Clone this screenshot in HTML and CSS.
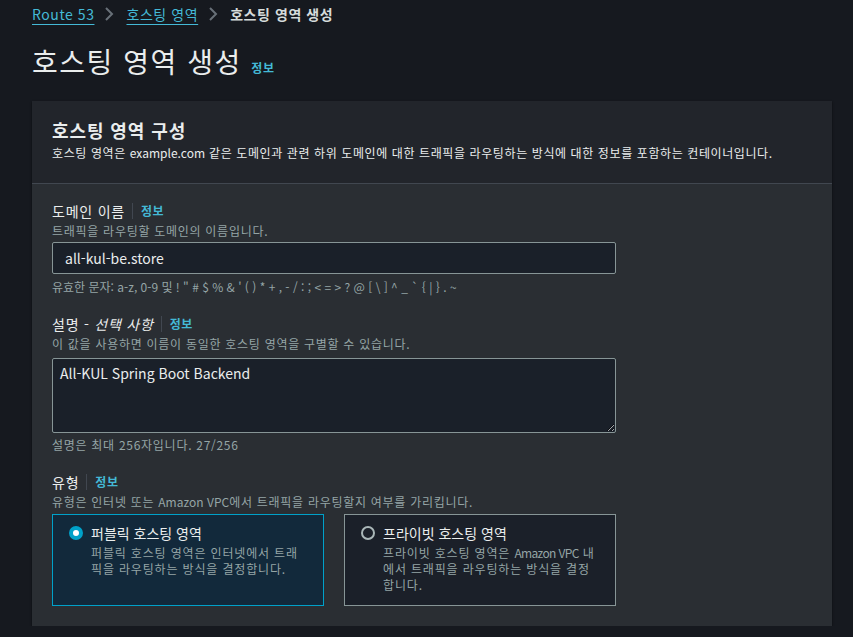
FILE: index.html
```html
<!DOCTYPE html>
<html lang="ko">
<head>
    <meta charset="UTF-8">
    <meta name="viewport" content="width=device-width, initial-scale=1.0">
    <title>호스팅 영역 생성</title>
    <link rel="stylesheet" href="styles.css">
</head>
<body>

<nav class="breadcrumbs">
    <a href="#" class="crumb-link">Route 53</a>
    <svg class="chevron" width="10" height="14" viewBox="0 0 10 14">
        <polyline points="2,1 8,7 2,13" fill="none" stroke="#687078" stroke-width="2"/>
    </svg>
    <a href="#" class="crumb-link">호스팅 영역</a>
    <svg class="chevron" width="10" height="14" viewBox="0 0 10 14">
        <polyline points="2,1 8,7 2,13" fill="none" stroke="#687078" stroke-width="2"/>
    </svg>
    <span class="crumb-current">호스팅 영역 생성</span>
</nav>

<h1 class="page-title">호스팅 영역 생성 <a href="#" class="info-link">정보</a></h1>

<div class="container">
    <div class="container-header">
        <h2>호스팅 영역 구성</h2>
        <p>호스팅 영역은 <span class="latin">example.com</span> 같은 도메인과 관련 하위 도메인에 대한 트래픽을 라우팅하는 방식에 대한 정보를 포함하는 컨테이너입니다.</p>
    </div>

    <div class="container-body">
        <div class="field">
            <div class="label"><span>도메인 이름</span><span class="divider"></span><a href="#" class="info-link">정보</a></div>
            <div class="description">트래픽을 라우팅할 도메인의 이름입니다.</div>
            <input class="text-input" type="text" value="all-kul-be.store">
            <div class="constraint">유효한 문자: a-z, 0-9 및 ! " # $ % &amp; ' ( ) * + , - / : ; &lt; = &gt; ? @ [ \ ] ^ _ ` { | } . ~</div>
        </div>

        <div class="field">
            <div class="label"><span>설명 - <i>선택 사항</i></span><span class="divider"></span><a href="#" class="info-link">정보</a></div>
            <div class="description">이 값을 사용하면 이름이 동일한 호스팅 영역을 구별할 수 있습니다.</div>
            <textarea class="text-area">All-KUL Spring Boot Backend</textarea>
            <div class="constraint spaced">설명은 최대 256자입니다. 27/256</div>
        </div>

        <div class="field last">
            <div class="label"><span>유형</span><span class="divider"></span><a href="#" class="info-link">정보</a></div>
            <div class="description">유형은 인터넷 또는 <span class="latin">Amazon VPC</span>에서 트래픽을 라우팅할지 여부를 가리킵니다.</div>
            <div class="tiles">
                <div class="tile selected">
                    <div class="tile-title"><span class="radio"></span>퍼블릭 호스팅 영역</div>
                    <div class="tile-desc">퍼블릭 호스팅 영역은 인터넷에서 트래픽을 라우팅하는 방식을 결정합니다.</div>
                </div>
                <div class="tile">
                    <div class="tile-title"><span class="radio"></span>프라이빗 호스팅 영역</div>
                    <div class="tile-desc">프라이빗 호스팅 영역은 <span class="latin">Amazon VPC</span> 내에서 트래픽을 라우팅하는 방식을 결정합니다.</div>
                </div>
            </div>
        </div>
    </div>
</div>

</body>
</html>
```

FILE: styles.css
```css
* {
    margin: 0;
    padding: 0;
    box-sizing: border-box;
}

body {
    background-color: #16191f;
    color: #eaeded;
    font-family: "Noto Sans CJK KR", "Noto Sans CJK JP", sans-serif;
    font-size: 14px;
    line-height: 20px;
    padding: 0 21px 0 32px;
}

a {
    color: #44b9d6;
}

.latin {
    letter-spacing: 0;
}

/* breadcrumbs */

.breadcrumbs {
    display: flex;
    align-items: center;
    padding-top: 4px;
    height: 24px;
}

.crumb-link {
    text-decoration: underline;
    text-underline-offset: 4px;
    letter-spacing: .04em;
}

.chevron {
    margin: 0 12px 0 10px;
}

.crumb-current {
    font-weight: bold;
    color: #d5dbdb;
    letter-spacing: .04em;
}

/* title */

.page-title {
    font-size: 28px;
    line-height: 36px;
    font-weight: normal;
    margin-top: 19px;
    margin-bottom: 22px;
    color: #eaeded;
    letter-spacing: .055em;
}

.info-link {
    font-size: 12px;
    font-weight: bold;
    text-decoration: none;
    line-height: 16px;
    letter-spacing: .05em;
}

/* container */

.container {
    width: 800px;
    background-color: #2a2e33;
    box-shadow: 0 1px 2px rgba(0, 0, 0, .6);
}

.container-header {
    background-color: #22252b;
    padding: 17px 20px 20px;
    border-bottom: 1px solid #414750;
}

.container-header h2 {
    font-size: 18px;
    line-height: 24px;
    font-weight: bold;
    letter-spacing: .05em;
}

.container-header p {
    margin-top: 1px;
    font-size: 12px;
    color: #eaeded;
    letter-spacing: .05em;
}

.container-body {
    padding: 17px 20px 20px;
}

.field {
    margin-bottom: 19px;
}

.field.last {
    margin-bottom: 0;
}

.label {
    display: flex;
    align-items: center;
    color: #eaeded;
    letter-spacing: .055em;
}

.divider {
    width: 1px;
    height: 16px;
    background-color: #414750;
    margin: 0 8px 0 7px;
}

.description {
    font-size: 12px;
    line-height: 16px;
    color: #95a5a6;
    margin-top: 2px;
    letter-spacing: .06em;
}

.constraint {
    font-size: 12px;
    line-height: 16px;
    color: #95a5a6;
    margin-top: 5px;
}

.constraint.spaced {
    margin-top: 4px;
    letter-spacing: .06em;
}

.text-input {
    display: block;
    width: 564px;
    height: 32px;
    margin-top: 3px;
    padding: 0 12px;
    background-color: #1a2029;
    border: 1px solid #879596;
    border-radius: 2px;
    color: #eaeded;
    font-family: inherit;
    font-size: 14px;
}

.text-area {
    display: block;
    width: 564px;
    height: 75px;
    margin-top: 6px;
    padding: 4px 7px;
    background-color: #1a2029;
    border: 1px solid #879596;
    border-radius: 2px;
    color: #eaeded;
    font-family: inherit;
    font-size: 14px;
    line-height: 20px;
}

/* tiles */

.tiles {
    display: grid;
    grid-template-columns: 272px 272px;
    gap: 20px;
    width: 564px;
    margin-top: 4px;
}

.tile {
    background-color: #1b2029;
    border: 1px solid #879596;
    padding: 8px 16px 12px 16px;
}

.tile.selected {
    background-color: #12293b;
    border-color: #00a1c9;
}

.tile-title {
    display: flex;
    align-items: center;
    color: #eaeded;
}

.radio {
    width: 14px;
    height: 14px;
    border-radius: 50%;
    border: 2px solid #aab7b8;
    margin-right: 8px;
    flex-shrink: 0;
}

.selected .radio {
    border: 4px solid #00a1c9;
    background-color: #fff;
}

.tile-desc {
    margin: 2px 0 0 22px;
    font-size: 12px;
    line-height: 16px;
    color: #95a5a6;
    letter-spacing: .07em;
}

.tile-desc .latin {
    letter-spacing: -.055em;
}
```
